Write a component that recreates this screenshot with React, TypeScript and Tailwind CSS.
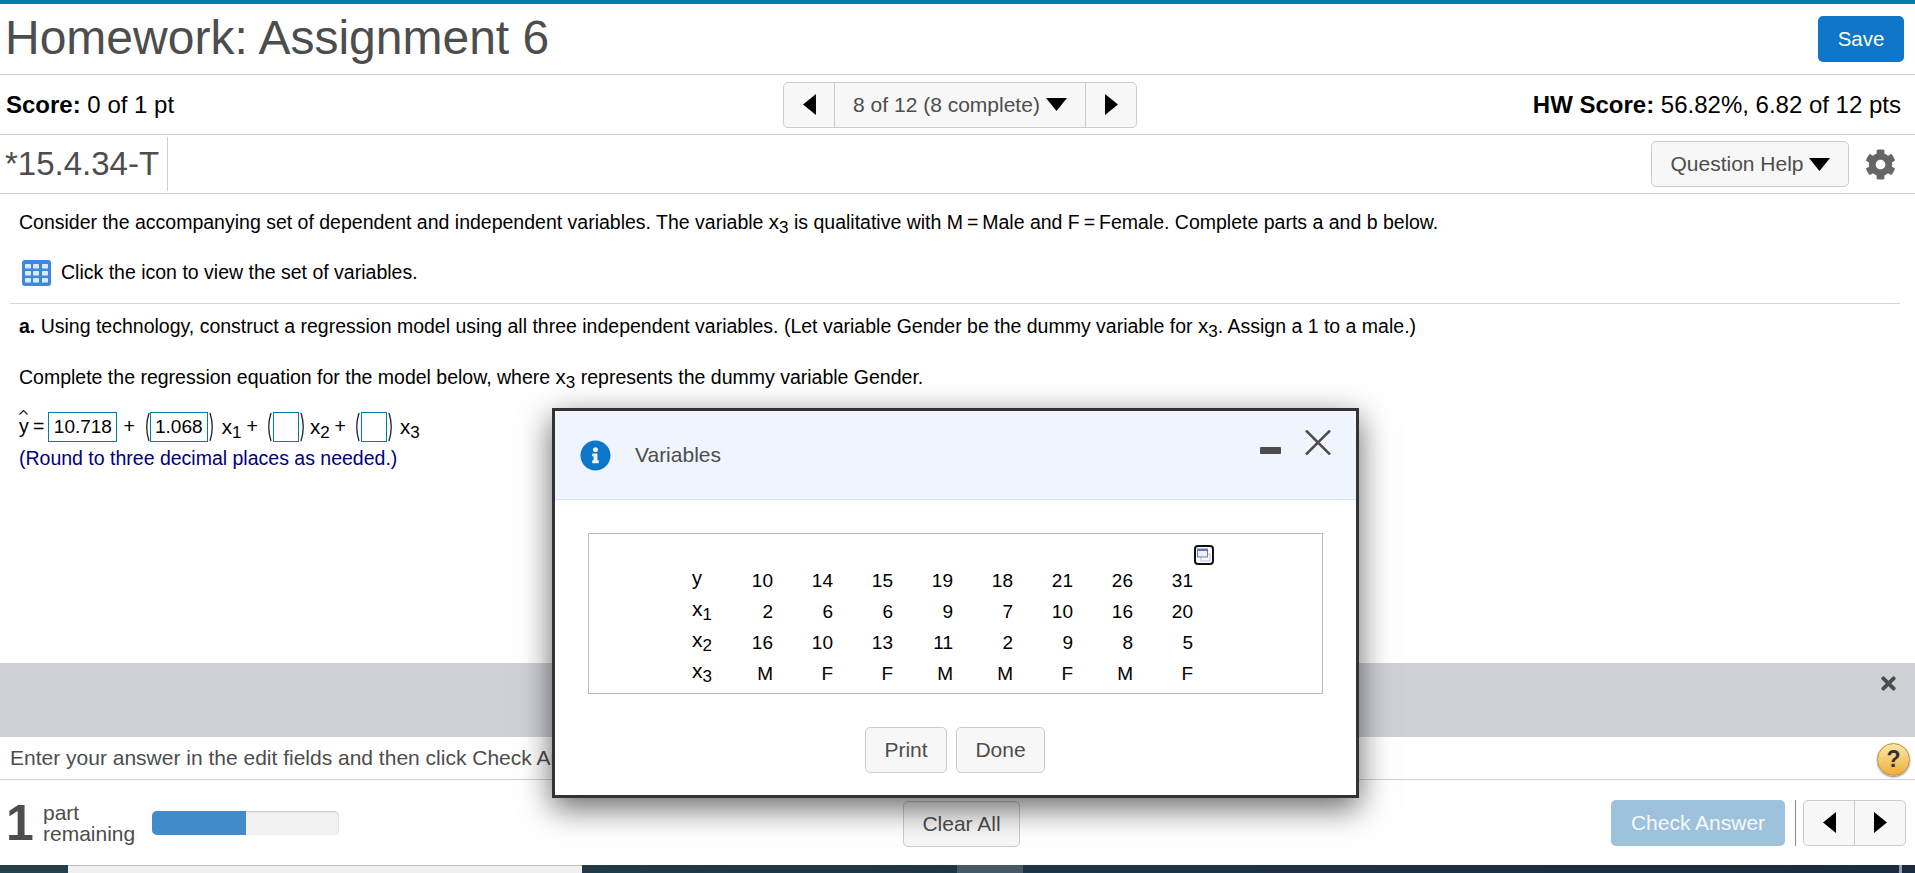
import { FaCog, FaInfoCircle, FaTimes } from "react-icons/fa";

const Tri = ({ dir, className = "" }: { dir: "left" | "right" | "down"; className?: string }) => {
    if (dir === "down") {
        return (
            <svg width="21" height="13" viewBox="0 0 21 13" className={className}>
                <polygon points="0,0 21,0 10.5,13" fill="#000" />
            </svg>
        );
    }
    return (
        <svg width="13" height="21" viewBox="0 0 13 21" className={className}>
            <polygon points={dir === "left" ? "13,0 13,21 0,10.5" : "0,0 0,21 13,10.5"} fill="#000" />
        </svg>
    );
};

// variable name with its subscript, the x is set larger than the text around it
const X = ({ n, className = "text-[20.5px]" }: { n: number; className?: string }) => (
    <span className={`whitespace-nowrap ${className}`}>
        x<sub className="text-[17px]">{n}</sub>
    </span>
);

const Btn = ({ children, className = "" }: { children: React.ReactNode; className?: string }) => (
    <div className={`flex items-center justify-center rounded-[5px] border border-[#ccc] bg-[#f7f7f7] text-[21px] text-[#4d4d4d] ${className}`}>
        {children}
    </div>
);

const Input = ({ value = "", className = "" }: { value?: string; className?: string }) => (
    <span className={`inline-flex h-[30px] items-center justify-center border border-[#007fa3] text-[19px] ${className}`}>
        {value}
    </span>
);

const Paren = ({ right = false }: { right?: boolean }) => (
    <svg width="6" height="30" viewBox="0 0 6 30" className="shrink-0">
        <path d={right ? "M1 1 Q5.5 15 1 29" : "M5 1 Q0.5 15 5 29"} fill="none" stroke="#222" strokeWidth="1.3" />
    </svg>
);

const rows: [number, (string | number)[]][] = [
    [0, [10, 14, 15, 19, 18, 21, 26, 31]],
    [1, [2, 6, 6, 9, 7, 10, 16, 20]],
    [2, [16, 10, 13, 11, 2, 9, 8, 5]],
    [3, ["M", "F", "F", "M", "M", "F", "M", "F"]],
];

const VariablesModal = () => (
    <div className="absolute top-[408px] left-[552px] flex h-[390px] w-[807px] flex-col border-[3px] border-[#333] bg-white shadow-[0_10px_30px_rgba(0,0,0,0.6)]">
        <div className="flex h-[89px] shrink-0 items-center border-b border-[#d5e5f3] bg-[#f0f5fd] pr-[25px] pl-[25px]">
            <FaInfoCircle size={31} color="#0e76c8" />
            <span className="ml-[24px] text-[21px] text-[#4d4d4d]">Variables</span>
            <div className="ml-auto flex items-start gap-[24px] self-start pt-[19px]">
                <div className="mt-[17px] h-[7px] w-[21px] rounded-[1px] bg-[#4d4d4d]" />
                <svg width="26" height="25" viewBox="0 0 26 25">
                    <path d="M1 0.5 L25 24.5 M25 0.5 L1 24.5" stroke="#4d4d4d" strokeWidth="2.5" />
                </svg>
            </div>
        </div>
        <div className="relative mx-[33px] mt-[33px] h-[161px] border border-[#bbb] pt-[32px] pl-[103px] text-[19px] text-black">
            <svg width="20" height="20" viewBox="0 0 20 20" className="absolute top-[11px] left-[605px]">
                <rect x="1" y="1" width="18" height="18" rx="3" fill="#fff" stroke="#111" strokeWidth="2" />
                <rect x="7" y="9" width="9" height="7" fill="none" stroke="#b5bce4" strokeWidth="1" />
                <rect x="3.5" y="4" width="10" height="8" fill="#eef0fa" stroke="#6a76c4" strokeWidth="1" />
                <rect x="3.5" y="4" width="10" height="2" fill="#6a76c4" />
            </svg>
            <div className="grid grid-cols-[21px_repeat(8,60px)] auto-rows-[31px] items-center">
                {rows.map(([i, vals]) => (
                    <div key={i} className="contents">
                        <span className="-mt-[6px] leading-[22px]">
                            {i === 0 ? <span className="text-[20px]">y</span> : <X n={i} className="text-[21px]" />}
                        </span>
                        {vals.map((v, j) => (
                            <span key={j} className="text-right">{v}</span>
                        ))}
                    </div>
                ))}
            </div>
        </div>
        <div className="mt-[33px] flex justify-center gap-[9px] pr-[1px]">
            <Btn className="h-[46px] w-[82px]">Print</Btn>
            <Btn className="h-[46px] w-[89px]">Done</Btn>
        </div>
    </div>
);

export default function App() {
    return (
        <div className="relative flex h-[873px] w-[1915px] flex-col overflow-hidden bg-white font-['Liberation_Sans',Arial,sans-serif] text-black">
            <div className="h-[4px] shrink-0 bg-[#007fa3]" />

            <div className="flex h-[71px] shrink-0 items-center justify-between border-b border-[#ccd0da] pr-[11px] pl-[5px]">
                <h1 className="-mt-[2px] text-[48px] text-[#4d4d4d]">Homework: Assignment 6</h1>
                <div className="flex h-[46px] w-[86px] items-center justify-center rounded-[5px] bg-[#0e76c8] text-[20.5px] text-white">
                    Save
                </div>
            </div>

            <div className="grid h-[60px] shrink-0 grid-cols-[783px_354px_1fr] items-center border-b border-[#ccd0da] text-[24px]">
                <div className="pl-[6px]">
                    <b>Score:</b> 0 of 1 pt
                </div>
                <div className="flex h-[46px] rounded-[5px] border border-[#ccc] bg-[#f7f7f7]">
                    <div className="flex w-[51px] items-center justify-center border-r border-[#ccc]">
                        <Tri dir="left" />
                    </div>
                    <div className="flex flex-1 items-center justify-center gap-[6px] text-[21px] text-[#4d4d4d]">
                        8 of 12 (8 complete)
                        <Tri dir="down" />
                    </div>
                    <div className="flex w-[51px] items-center justify-center border-l border-[#ccc]">
                        <Tri dir="right" />
                    </div>
                </div>
                <div className="pr-[14px] text-right">
                    <b>HW Score:</b> 56.82%, 6.82 of 12 pts
                </div>
            </div>

            <div className="flex h-[59px] shrink-0 items-center border-b border-[#ccd0da] pr-[19px]">
                <div className="flex h-[54px] w-[168px] items-center border-r border-[#ccd0da] pl-[5px] text-[33px] text-[#4d4d4d]">
                    *15.4.34-T
                </div>
                <Btn className="ml-auto h-[46px] w-[198px] gap-[5px]">
                    Question Help
                    <Tri dir="down" />
                </Btn>
                <FaCog size={31} color="#666" className="ml-[16px]" />
            </div>

            <div className="h-[469px] shrink-0 pt-[16px] text-[19.5px]">
                <p className="h-[34px] pl-[19px] leading-[24px]">
                    Consider the accompanying set of dependent and independent variables. The variable <X n={3} /> is qualitative with M{"\u2009"}={"\u2009"}Male and F{"\u2009"}={"\u2009"}Female. Complete parts a and b below.
                </p>
                <div className="mt-[16px] flex h-[26px] items-center gap-[10px] pl-[22px]">
                    <svg width="29" height="26" viewBox="0 0 29 26" className="shrink-0">
                        <rect width="29" height="26" rx="3" fill="#3d87dc" />
                        {[4, 11, 18].map((y) =>
                            [3, 11, 20].map((x) => (
                                <rect key={`${x}-${y}`} x={x} y={y} width="6" height="4.5" rx="0.5" fill="#dbe9fa" />
                            )),
                        )}
                    </svg>
                    <span>Click the icon to view the set of variables.</span>
                </div>
                <div className="mt-[17px] mr-[15px] ml-[10px] border-t border-[#d5d5e0]" />
                <p className="mt-[10px] pl-[19px] leading-[24px]">
                    <b>a.</b> Using technology, construct a regression model using all three independent variables. (Let variable Gender be the dummy variable for <X n={3} />. Assign a 1 to a male.)
                </p>
                <p className="mt-[27px] pl-[19px] leading-[24px]">
                    Complete the regression equation for the model below, where <X n={3} /> represents the dummy variable Gender.
                </p>
                <div className="mt-[23px] flex h-[30px] items-center pl-[19px]">
                    <span className="relative w-[10px]">
                        y
                        <svg width="9" height="5" viewBox="0 0 9 5" className="absolute -top-[2px] left-0">
                            <path d="M0.5 4.5 L4.5 0.5 L8.5 4.5" fill="none" stroke="#222" strokeWidth="1.2" />
                        </svg>
                    </span>
                    <span className="ml-[4px]">=</span>
                    <Input value="10.718" className="ml-[4px] w-[69px]" />
                    <span className="ml-[6px]">+</span>
                    <span className="ml-[9px] flex items-center">
                        <Paren />
                        <Input value="1.068" className="w-[58px]" />
                        <span className="ml-[1px]"><Paren right /></span>
                    </span>
                    <span className="ml-[7px]"><X n={1} /></span>
                    <span className="ml-[5px]">+</span>
                    <span className="ml-[8px] flex items-center">
                        <Paren />
                        <Input className="ml-[1px] w-[26px]" />
                        <span className="ml-[1px]"><Paren right /></span>
                    </span>
                    <span className="ml-[4px]"><X n={2} /></span>
                    <span className="ml-[5px]">+</span>
                    <span className="ml-[8px] flex items-center">
                        <Paren />
                        <Input className="ml-[1px] w-[26px]" />
                        <span className="ml-[1px]"><Paren right /></span>
                    </span>
                    <span className="ml-[6px]"><X n={3} /></span>
                </div>
                <p className="mt-[4px] pl-[19px] leading-[24px] text-[#000080]">(Round to three decimal places as needed.)</p>
            </div>

            <div className="flex h-[74px] shrink-0 justify-end bg-[#d0d1d6] pt-[10px] pr-[16px]">
                <FaTimes size={21} color="#4d4d4d" />
            </div>

            <div className="flex h-[43px] shrink-0 items-center justify-between border-b border-[#ccd0da] pr-[5px] pl-[10px] text-[21px] text-[#4d4d4d]">
                <span>Enter your answer in the edit fields and then click Check Answer.</span>
                <div className="mt-[2px] flex h-[33px] w-[33px] items-center justify-center rounded-full border border-[#b8923a] bg-linear-to-b from-[#fbe7a6] to-[#efae2e] text-[23px] font-bold text-[#333] shadow-[0_1px_2px_rgba(0,0,0,0.5)]">
                    ?
                </div>
            </div>

            <div className="relative flex h-[85px] shrink-0 items-center pr-[9px] pl-[4px]">
                <span className="w-[32px] text-center text-[50px] leading-none font-bold text-[#4d4d4d]">1</span>
                <span className="ml-[7px] w-[100px] text-[21px] leading-[21px] text-[#4d4d4d]">
                    part
                    <br />
                    remaining
                </span>
                <div className="ml-[9px] h-[24px] w-[187px] overflow-hidden rounded-[5px] bg-[#f2f2f2] shadow-[inset_0_1px_2px_rgba(0,0,0,0.2)]">
                    <div className="h-full bg-[#428bca]" style={{ width: "50%" }} />
                </div>
                <Btn className="absolute top-[21px] left-[903px] h-[46px] w-[117px]">Clear All</Btn>
                <div className="ml-auto flex h-[46px] w-[174px] items-center justify-center rounded-[5px] bg-[#9ec1dc] text-[21px] text-white/90">
                    Check Answer
                </div>
                <div className="mr-[7px] ml-[10px] h-[46px] w-px bg-[#888]" />
                <div className="flex h-[46px] w-[103px] rounded-[5px] border border-[#ccc] bg-[#f7f7f7]">
                    <div className="flex flex-1 items-center justify-center border-r border-[#ccc]">
                        <Tri dir="left" />
                    </div>
                    <div className="flex flex-1 items-center justify-center">
                        <Tri dir="right" />
                    </div>
                </div>
            </div>

            <div className="flex h-[8px] shrink-0 bg-linear-to-r from-[#24404a] to-[#1a2b40]">
                <div className="ml-[68px] h-full w-[514px] border-t border-[#bbb] bg-[#f0f0f0]" />
                <div className="ml-[375px] h-full w-[66px] bg-[#455a64]" />
                <div className="ml-[876px] h-full w-[3px] bg-[#8e9bb0]" />
            </div>

            <VariablesModal />
        </div>
    );
}
